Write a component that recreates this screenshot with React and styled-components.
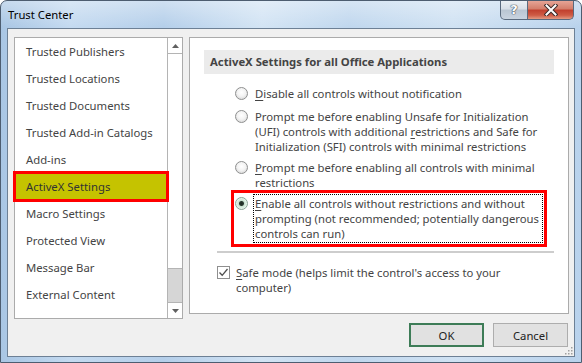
import React from 'react';
import styled, { createGlobalStyle, css } from 'styled-components';

const UI = `"Noto Sans", "Open Sans", "DejaVu Sans", sans-serif`;
const FS = '11.3px';

const GlobalStyle = createGlobalStyle`
  html, body { margin: 0; padding: 0; background: #ffffff; }
  body { font-family: ${UI}; overflow: hidden; }
  * { box-sizing: border-box; }
`;

const Window = styled.div`
  width: 582px;
  height: 363px;
  display: flex;
  flex-direction: column;
  border: 1px solid #4d5d70;
  border-radius: 7px 7px 0 0;
  overflow: hidden;
  background:
    linear-gradient(180deg, rgba(255,255,255,0.35) 0px, rgba(255,255,255,0) 26px),
    linear-gradient(90deg, #a9c6e4 0%, #c4daf0 12%, #b5cfea 28%, #d3e4f4 45%, #c0d7ee 60%, #d0e2f3 78%, #b9d2ec 100%);
`;

const TitleBar = styled.div`
  height: 27px;
  flex: none;
  display: flex;
  align-items: flex-start;
`;

const Title = styled.div`
  padding: 6px 0 0 7px;
  font-size: ${FS};
  line-height: 16px;
  color: #000;
`;

const CaptionButtons = styled.div`
  margin: -1px 7px 0 auto;
  display: flex;
`;

const CaptionButton = styled.div`
  height: 20px;
  width: ${p => p.$w}px;
  display: flex;
  align-items: center;
  justify-content: center;
  border: 1px solid #5a6a7e;
  border-top: none;
  ${p => p.$variant === 'close' ? css`
    border-left: none;
    border-radius: 0 0 5px 0;
    background: linear-gradient(180deg, #e8a99b 0%, #d47f6c 45%, #c2412f 55%, #cf5b45 80%, #e39a82 100%);
  ` : css`
    border-radius: 0 0 0 5px;
    background: linear-gradient(180deg, #eef2f6 0%, #d9e0e8 45%, #bac6d3 55%, #c9d4e0 100%);
  `}
`;

const HelpGlyph = styled.span`
  font-family: "DejaVu Sans", sans-serif;
  font-weight: bold;
  font-size: 13px;
  line-height: 13px;
  color: #fff;
  text-shadow: 0 0 1px #3a4452, 0 0 1px #3a4452, 0 0 1px #3a4452;
`;

const Client = styled.div`
  position: relative;
  flex: 1;
  margin: 0 6px 5px 6px;
  border: 1px solid #6d8095;
  background: #f0f0f0;
  padding: 8px 5px 0 6px;
  display: flex;
  flex-direction: column;
`;

const MainRow = styled.div`
  display: flex;
  align-items: flex-start;
  gap: 6px;
`;

const ListBox = styled.div`
  width: 169px;
  height: 282px;
  border: 1px solid #ababab;
  background: #fff;
  display: flex;
`;

const Items = styled.div`
  width: 152px;
  height: 280px;
  clip-path: inset(-6px -6px 0 -6px);
`;

const ListItem = styled.div`
  height: 27px;
  line-height: 27px;
  padding-left: 11px;
  font-size: ${FS};
  color: #444;
  white-space: nowrap;
  ${p => p.$selected && css`
    background: #c5c300;
    color: #333;
    outline: 3px solid #ff0000;
    outline-offset: -1px;
  `}
`;

const ScrollBar = styled.div`
  width: 15px;
  border-left: 1px solid #b4b4b4;
  display: flex;
  flex-direction: column;
`;

const ArrowButton = styled.div`
  height: ${p => p.$h}px;
  flex: none;
  background: #fff;
  display: flex;
  align-items: center;
  justify-content: center;
  ${p => p.$down ? css`border-top: 1px solid #b4b4b4;` : css`border-bottom: 1px solid #b4b4b4;`}
`;

const Thumb = styled.div`
  height: 215px;
  flex: none;
  background: #fff;
  border-bottom: 1px solid #b4b4b4;
`;

const Track = styled.div`
  flex: 1;
  background: #d6d6d6;
`;

const Panel = styled.div`
  width: 380px;
  height: 277px;
  border: 1px solid #ababab;
  background: #fff;
  display: flex;
  flex-direction: column;
`;

const SectionHeader = styled.div`
  margin: 12px 0 0 14px;
  width: 350px;
  height: 24px;
  background: #ebebeb;
  padding-left: 6px;
  font-size: ${FS};
  line-height: 23px;
  font-weight: bold;
  color: #444;
  white-space: nowrap;
`;

const Options = styled.div`
  margin: 10px 0 0 45px;
  display: flex;
  flex-direction: column;
  gap: 2px;
  & > :first-child { margin-bottom: 2px; }
`;

const OptionRow = styled.div`
  display: flex;
  align-items: flex-start;
  width: 308px;
  ${p => p.$marked && css`
    outline: 3px solid #ff0000;
    outline-offset: 1px;
  `}
`;

const Radio = styled.span`
  flex: none;
  width: 13px;
  height: 13px;
  margin-top: 3px;
  border-radius: 50%;
  border: 1px solid ${p => p.$checked ? '#8aa596' : '#8e8f8f'};
  background: ${p => p.$checked
    ? 'radial-gradient(circle, #1e2a22 0px, #2a3a30 2px, #c9e3d2 3px, #e4f2e8 5px, #f6fbf7 6px)'
    : 'radial-gradient(circle at 50% 40%, #ffffff 0px, #f3f3f3 4px, #e2e2e2 6px)'};
`;

const OptionLabel = styled.span`
  margin-left: 5px;
  width: 290px;
  padding: 1px;
  border: 1px dotted ${p => p.$focused ? '#000' : 'transparent'};
  font-size: ${FS};
  line-height: 15px;
  color: #444;
  white-space: nowrap;
`;

const U = styled.span`
  text-decoration: underline;
  text-underline-offset: 2px;
`;

const Separator = styled.div`
  margin: 8px 0 0 27px;
  width: 337px;
  height: 2px;
  background: #cdcdcd;
`;

const CheckRow = styled.div`
  margin: 13px 0 0 27px;
  display: flex;
  align-items: flex-start;
`;

const CheckBox = styled.span`
  flex: none;
  width: 13px;
  height: 13px;
  border: 1px solid #8f8f8f;
  background: #fff;
  display: flex;
  align-items: center;
  justify-content: center;
`;

const CheckLabel = styled.span`
  margin-left: 6px;
  margin-top: -1px;
  font-size: ${FS};
  line-height: 15px;
  color: #444;
  white-space: nowrap;
`;

const Footer = styled.div`
  margin: 4px 1px 0 0;
  display: flex;
  justify-content: flex-end;
  gap: 9px;
`;

const Button = styled.button`
  width: 75px;
  height: 24px;
  font-family: ${UI};
  font-size: ${FS};
  color: #222;
  background: #e1e1e1;
  border: ${p => p.$default ? '2px solid #3d7c57' : '1px solid #adadad'};
  padding: 0;
  cursor: default;
`;

const Grip = styled.svg`
  position: absolute;
  right: 1px;
  bottom: 1px;
`;

const items = [
  'Trusted Publishers',
  'Trusted Locations',
  'Trusted Documents',
  'Trusted Add-in Catalogs',
  'Add-ins',
  'ActiveX Settings',
  'Macro Settings',
  'Protected View',
  'Message Bar',
  'External Content',
  'File Block Settings',
];

export default function App() {
  return (
    <>
      <GlobalStyle />
      <Window>
        <TitleBar>
          <Title>Trust Center</Title>
          <CaptionButtons>
            <CaptionButton $w={28}><HelpGlyph>?</HelpGlyph></CaptionButton>
            <CaptionButton $w={46} $variant="close">
              <svg width="14" height="12" viewBox="0 0 14 12">
                <path d="M2.5 1.5 L11.5 10.5 M11.5 1.5 L2.5 10.5" stroke="#3b2a28" strokeWidth="4" strokeLinecap="square" />
                <path d="M2.5 1.5 L11.5 10.5 M11.5 1.5 L2.5 10.5" stroke="#ffffff" strokeWidth="2" strokeLinecap="square" />
              </svg>
            </CaptionButton>
          </CaptionButtons>
        </TitleBar>
        <Client>
          <MainRow>
            <ListBox>
              <Items>
                {items.map(t => (
                  <ListItem key={t} $selected={t === 'ActiveX Settings'}>{t}</ListItem>
                ))}
              </Items>
              <ScrollBar>
                <ArrowButton $h={16}>
                  <svg width="7" height="4" viewBox="0 0 7 4"><polygon points="0,4 7,4 3.5,0" fill="#606060" /></svg>
                </ArrowButton>
                <Thumb />
                <Track />
                <ArrowButton $h={16} $down>
                  <svg width="7" height="4" viewBox="0 0 7 4"><polygon points="0,0 7,0 3.5,4" fill="#606060" /></svg>
                </ArrowButton>
              </ScrollBar>
            </ListBox>
            <Panel>
              <SectionHeader>ActiveX Settings for all Office Applications</SectionHeader>
              <Options>
                <OptionRow>
                  <Radio />
                  <OptionLabel><U>D</U>isable all controls without notification</OptionLabel>
                </OptionRow>
                <OptionRow>
                  <Radio />
                  <OptionLabel>
                    Prompt me before enabling Unsafe for Initialization<br />
                    (UFI) controls with additional <U>r</U>estrictions and Safe for<br />
                    Initialization (SFI) controls with minimal restrictions
                  </OptionLabel>
                </OptionRow>
                <OptionRow>
                  <Radio />
                  <OptionLabel>
                    <U>P</U>rompt me before enabling all controls with minimal<br />
                    restrictions
                  </OptionLabel>
                </OptionRow>
                <OptionRow $marked>
                  <Radio $checked />
                  <OptionLabel $focused>
                    <U>E</U>nable all controls without restrictions and without<br />
                    prompting (not recommended; potentially dangerous<br />
                    controls can run)
                  </OptionLabel>
                </OptionRow>
              </Options>
              <Separator />
              <CheckRow>
                <CheckBox>
                  <svg width="11" height="11" viewBox="0 0 11 11">
                    <polyline points="1.5,5.5 4.2,8.3 9.5,2" fill="none" stroke="#4d4d4d" strokeWidth="1.3" />
                  </svg>
                </CheckBox>
                <CheckLabel>
                  <U>S</U>afe mode (helps limit the control's access to your<br />
                  computer)
                </CheckLabel>
              </CheckRow>
            </Panel>
          </MainRow>
          <Footer>
            <Button $default>OK</Button>
            <Button>Cancel</Button>
          </Footer>
          <Grip width="10" height="10" viewBox="0 0 10 10">
            {[[8,2],[8,5],[5,5],[8,8],[5,8],[2,8]].map(([x,y]) => (
              <rect key={`${x}-${y}`} x={x} y={y} width="1.5" height="1.5" fill="#a0a0a0" />
            ))}
          </Grip>
        </Client>
      </Window>
    </>
  );
}
